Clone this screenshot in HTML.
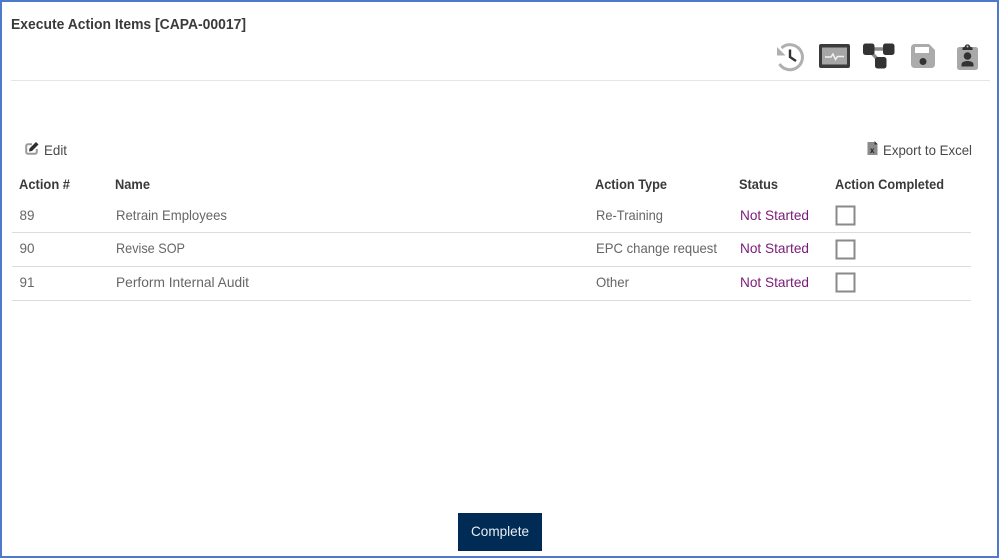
<!DOCTYPE html>
<html lang="en">
<head>
<meta charset="utf-8">
<title>Execute Action Items</title>
<style>
html,body{margin:0;padding:0;background:#fff;width:1000px;height:559px;overflow:hidden}
svg{display:block;filter:blur(.3px)}
text{font-family:"Liberation Sans",sans-serif;font-size:14px;fill:#666}
.b{font-weight:700;fill:#3a3a3a}
.d{fill:#484848}
.p{fill:#7a1a78}
</style>
</head>
<body>
<svg width="1000" height="559" viewBox="0 0 1000 559" xmlns="http://www.w3.org/2000/svg">
<rect x="0" y="0" width="1000" height="559" fill="#fff"/>
<rect x="1" y="1" width="997" height="556" fill="none" stroke="#4f7acb" stroke-width="2"/>

<text x="11" y="29" class="b" style="font-size:14.500px" textLength="235" lengthAdjust="spacingAndGlyphs">Execute Action Items [CAPA-00017]</text>
<rect x="11" y="80" width="979" height="1" fill="#e6e6e6"/>

<!-- history -->
<path d="M781.500 48A12.500 12.500 0 1 1 779.500 64" fill="none" stroke="#b0b0b0" stroke-width="3"/>
<path d="M777 47V55.500H785.500Z" fill="#b0b0b0"/>
<path d="M790 49.500V57L796 61" fill="none" stroke="#333" stroke-width="2.400"/>
<!-- monitor -->
<rect x="819" y="44" width="31" height="24" rx="2" fill="#3b3b3b"/>
<rect x="822" y="47.500" width="25" height="17" fill="#a6a6a6"/>
<path d="M825 57H831L833 54L835.500 59.500L837.500 56.500H844" fill="none" stroke="#f2f2f2" stroke-width="1.500"/>
<!-- network -->
<path d="M869 49H888M870 51L880 62" stroke="#8c8c8c" stroke-width="3.400" fill="none"/>
<rect x="863" y="43.500" width="11.500" height="11.500" rx="2.500" fill="#333"/>
<rect x="883" y="43.500" width="11.500" height="11.500" rx="2.500" fill="#333"/>
<rect x="875" y="57" width="11.500" height="11.500" rx="2.500" fill="#333"/>
<!-- save -->
<path d="M914.500 44H929L935 50V64.500A3.500 3.500 0 0 1 931.500 68H914.500A3.500 3.500 0 0 1 911 64.500V47.500A3.500 3.500 0 0 1 914.500 44Z" fill="#ababab"/>
<rect x="915" y="47" width="14" height="6" fill="#fff"/>
<circle cx="923" cy="61.500" r="3.500" fill="#333"/>
<!-- clipboard -->
<rect x="957" y="47" width="21" height="23" rx="2.500" fill="#a9a9a9"/>
<path d="M962.500 50V47.500L964.500 47A3.200 4 0 0 1 970.500 47L972.500 47.500V50Z" fill="#333"/>
<circle cx="967.500" cy="46.500" r="1" fill="#ccc"/>
<circle cx="967.500" cy="56" r="3.800" fill="#333"/>
<path d="M961.500 66.500V64.500C961.500 62 964.500 61 967.500 61S973.500 62 973.500 64.500V66.500Z" fill="#333"/>

<!-- edit -->
<path d="M32 144.200H28A1.800 1.800 0 0 0 26.200 146V152A1.800 1.800 0 0 0 28 153.800H35A1.800 1.800 0 0 0 36.800 152V149" fill="none" stroke="#9a9a9a" stroke-width="2"/>
<path d="M29.500 148.500L36 142L38.500 144.500L32 151L29 151.500Z" fill="#2e2e2e"/>
<text x="44" y="155" class="d" textLength="23" lengthAdjust="spacingAndGlyphs">Edit</text>

<!-- excel -->
<path d="M867.500 142H874L877.500 145.500V155H867.500Z" fill="#8a8a8a"/>
<path d="M874.500 141L878 144.500H874.500Z" fill="#333"/>
<text x="870" y="153" style="font-size:8px;font-weight:700;fill:#222">x</text>
<text x="883" y="155" class="d" textLength="89" lengthAdjust="spacingAndGlyphs">Export to Excel</text>

<!-- headers -->
<text x="19" y="189" class="b" textLength="51" lengthAdjust="spacingAndGlyphs">Action #</text>
<text x="115" y="189" class="b" textLength="35" lengthAdjust="spacingAndGlyphs">Name</text>
<text x="595" y="189" class="b" textLength="72" lengthAdjust="spacingAndGlyphs">Action Type</text>
<text x="739" y="189" class="b" textLength="39" lengthAdjust="spacingAndGlyphs">Status</text>
<text x="835" y="189" class="b" textLength="109" lengthAdjust="spacingAndGlyphs">Action Completed</text>

<!-- row 1 -->
<text x="19.500" y="220" textLength="15" lengthAdjust="spacingAndGlyphs">89</text>
<text x="116" y="220" textLength="111" lengthAdjust="spacingAndGlyphs">Retrain Employees</text>
<text x="596" y="220" textLength="67" lengthAdjust="spacingAndGlyphs">Re-Training</text>
<text x="740" y="220" class="p" textLength="69" lengthAdjust="spacingAndGlyphs">Not Started</text>
<rect x="836.500" y="206.500" width="18" height="18" fill="#fff" stroke="#8a8a8a" stroke-width="2"/>
<rect x="12" y="232" width="959" height="1" fill="#dcdcdc"/>

<!-- row 2 -->
<text x="19.500" y="253" textLength="15" lengthAdjust="spacingAndGlyphs">90</text>
<text x="116" y="253" textLength="69" lengthAdjust="spacingAndGlyphs">Revise SOP</text>
<text x="596" y="253" textLength="121" lengthAdjust="spacingAndGlyphs">EPC change request</text>
<text x="740" y="253" class="p" textLength="69" lengthAdjust="spacingAndGlyphs">Not Started</text>
<rect x="836.500" y="240.500" width="18" height="18" fill="#fff" stroke="#8a8a8a" stroke-width="2"/>
<rect x="12" y="266" width="959" height="1" fill="#dcdcdc"/>

<!-- row 3 -->
<text x="19.500" y="287" textLength="15" lengthAdjust="spacingAndGlyphs">91</text>
<text x="116" y="287" textLength="133" lengthAdjust="spacingAndGlyphs">Perform Internal Audit</text>
<text x="596" y="287" textLength="33" lengthAdjust="spacingAndGlyphs">Other</text>
<text x="740" y="287" class="p" textLength="69" lengthAdjust="spacingAndGlyphs">Not Started</text>
<rect x="836.500" y="273.500" width="18" height="18" fill="#fff" stroke="#8a8a8a" stroke-width="2"/>
<rect x="12" y="300" width="959" height="1" fill="#dcdcdc"/>

<!-- button -->
<rect x="458" y="513" width="84" height="38" fill="#002b55"/>
<text x="471" y="536" style="fill:#e8eef5" textLength="58" lengthAdjust="spacingAndGlyphs">Complete</text>
</svg>
</body>
</html>
